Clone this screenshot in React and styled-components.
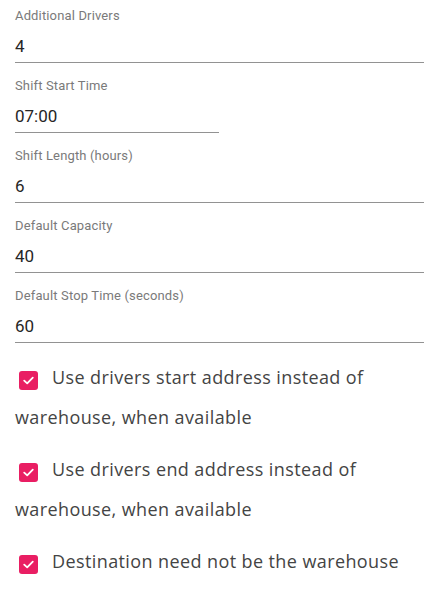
import React from "react";
import styled, { createGlobalStyle } from "styled-components";

const Global = createGlobalStyle`
  html, body { margin: 0; padding: 0; background: #ffffff; }
  body { font-family: Roboto, "Liberation Sans", sans-serif; }
`;

const Page = styled.div`
  width: 431px;
  box-sizing: border-box;
  padding: 0 7px 0 15px;
  display: flex;
  flex-direction: column;
`;

const Fields = styled.div`
  display: flex;
  flex-direction: column;
  gap: 7px;
`;

const Field = styled.div`
  padding-top: 8px;
  width: ${(p) => (p.$narrow ? "204px" : "100%")};
  display: flex;
  flex-direction: column;
`;

const Label = styled.div`
  font-family: Roboto, sans-serif;
  font-size: 13px;
  line-height: 15px;
  letter-spacing: 0.15px;
  color: #7a7a7a;
`;

const Value = styled.div`
  margin-top: 13px;
  font-family: Roboto, sans-serif;
  font-size: 17px;
  line-height: 20px;
  color: #262626;
  padding-bottom: 6px;
  border-bottom: 1px solid #929292;
`;

const Options = styled.div`
  margin-top: 14px;
  display: flex;
  flex-direction: column;
  gap: 12px;
`;

const Option = styled.label`
  display: block;
  font-family: "Open Sans", sans-serif;
  font-size: 18px;
  line-height: 40px;
  color: #444444;
  letter-spacing: 0.4px;
`;

const Box = styled.span`
  display: inline-flex;
  align-items: center;
  justify-content: center;
  width: 19px;
  height: 19px;
  border-radius: 3px;
  background: #e91e63;
  margin-left: 4px;
  margin-right: 14px;
  vertical-align: -3px;
`;

const Check = () => (
  <svg width="13" height="13" viewBox="0 0 13 13">
    <path d="M2.2 6.6 L5.2 9.4 L10.8 3.6" fill="none" stroke="#fff" strokeWidth="1.8" strokeLinecap="round" strokeLinejoin="round" />
  </svg>
);

const fields = [
  { label: "Additional Drivers", value: "4" },
  { label: "Shift Start Time", value: "07:00", narrow: true },
  { label: "Shift Length (hours)", value: "6" },
  { label: "Default Capacity", value: "40" },
  { label: "Default Stop Time (seconds)", value: "60" },
];

const options = [
  "Use drivers start address instead of warehouse, when available",
  "Use drivers end address instead of warehouse, when available",
  "Destination need not be the warehouse",
];

export default function App() {
  return (
    <>
      <Global />
      <Page>
        <Fields>
          {fields.map((f) => (
            <Field key={f.label} $narrow={f.narrow}>
              <Label>{f.label}</Label>
              <Value>{f.value}</Value>
            </Field>
          ))}
        </Fields>
        <Options>
          {options.map((o) => (
            <Option key={o}>
              <Box>
                <Check />
              </Box>
              {o}
            </Option>
          ))}
        </Options>
      </Page>
    </>
  );
}
